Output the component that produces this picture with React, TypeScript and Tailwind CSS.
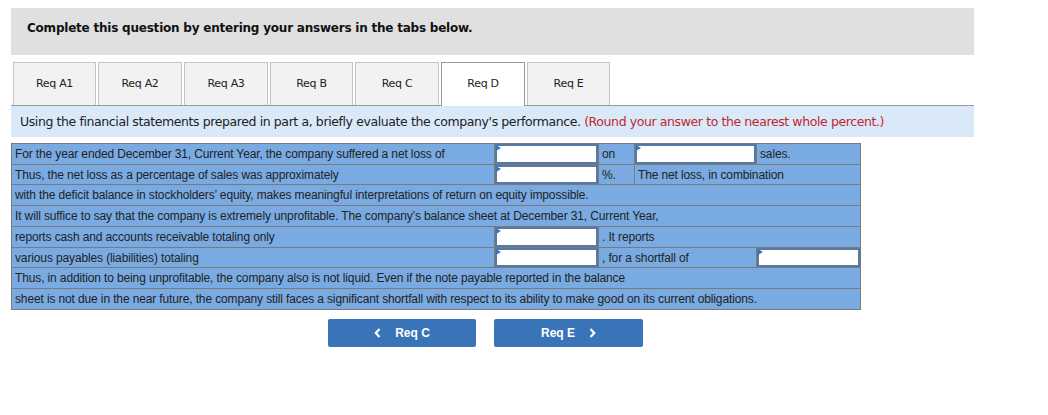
import React from "react";

const V = { fontFamily: '"DejaVu Sans", Verdana, sans-serif' } as const;
const A = { fontFamily: '"Liberation Sans", Arial, sans-serif' } as const;

function Input() {
  return (
    <div className="relative w-full h-full bg-white border-2 border-[#5679a8]">
      <svg className="absolute left-[-1px] top-[-1px]" width="5" height="6" viewBox="0 0 5 6">
        <path d="M0 0 L5 3 L0 6 Z" fill="#3b74c4" />
      </svg>
    </div>
  );
}

const td = "border border-[#7a7a7a] px-[3px] py-0 align-middle whitespace-nowrap";
const tdIn = "border border-[#7a7a7a] p-0 align-middle";

export default function App() {
  const tabs: [string, string][] = [
    ["Req A1", "w-[83px]"],
    ["Req A2", "w-[84px]"],
    ["Req A3", "w-[84px]"],
    ["Req B", "w-[83px]"],
    ["Req C", "w-[84px]"],
    ["Req D", "w-[84px]"],
    ["Req E", "w-[83px]"],
  ];
  return (
    <div className="w-[1048px] h-[415px] bg-white overflow-hidden">
      <div className="ml-[11px] w-[963px] pt-[8px]">
        <div className="h-[47px] bg-[#e0e0e0] pl-[16px] pt-[11px]">
          <div style={V} className="text-[12px] font-bold text-[#111] tracking-[-0.22px]">
            Complete this question by entering your answers in the tabs below.
          </div>
        </div>
        <div className="mt-[7px] flex gap-[2px] pl-[2px] border-b border-[#999]">
          {tabs.map(([t, w]) => {
            const active = t === "Req D";
            return (
              <div
                key={t}
                style={V}
                className={
                  w +
                  " h-[43px] flex items-center justify-center text-[11px] text-[#222] tracking-[-0.3px] " +
                  (active
                    ? "bg-white border border-[#999] border-b-0 -mb-px h-[44px]"
                    : "bg-[#f2f2f2] border border-[#c4c4c4] border-b-0")
                }
              >
                {t}
              </div>
            );
          })}
        </div>
        <div className="h-[31px] bg-[#d9e9f8] flex items-center pl-[9px] pt-[2px]">
          <div style={V} className="text-[12.5px] text-[#222] tracking-[-0.4px] whitespace-nowrap">
            Using the financial statements prepared in part a, briefly evaluate the company's performance.{" "}
            <span className="text-[#c4262e]">(Round your answer to the nearest whole percent.)</span>
          </div>
        </div>
        <table
          style={A}
          className="mt-[6px] w-[849px] border-collapse table-fixed bg-[#79aae2] text-[12px] tracking-[-0.13px] text-[#222] leading-none"
        >
          <colgroup>
            <col className="w-[483px]" />
            <col className="w-[104px]" />
            <col className="w-[36px]" />
            <col className="w-[122px]" />
            <col className="w-[104px]" />
          </colgroup>
          <tbody>
            <tr className="h-[21px]">
              <td className={td}>For the year ended December 31, Current Year, the company suffered a net loss of</td>
              <td className={tdIn + " h-[21px]"}><Input /></td>
              <td className={td}>on</td>
              <td className={tdIn + " h-[21px]"}><Input /></td>
              <td className={td}>sales.</td>
            </tr>
            <tr className="h-[20px]">
              <td className={td}>Thus, the net loss as a percentage of sales was approximately</td>
              <td className={tdIn + " h-[20px]"}><Input /></td>
              <td className={td}>%.</td>
              <td className={td} colSpan={2}>The net loss, in combination</td>
            </tr>
            <tr className="h-[21px]">
              <td className={td} colSpan={5}>
                with the deficit balance in stockholders’ equity, makes meaningful interpretations of return on equity impossible.
              </td>
            </tr>
            <tr className="h-[21px]">
              <td className={td} colSpan={5}>
                It will suffice to say that the company is extremely unprofitable. The company’s balance sheet at December 31, Current Year,
              </td>
            </tr>
            <tr className="h-[21px]">
              <td className={td}>reports cash and accounts receivable totaling only</td>
              <td className={tdIn + " h-[21px]"}><Input /></td>
              <td className={td} colSpan={3}>. It reports</td>
            </tr>
            <tr className="h-[20px]">
              <td className={td}>various payables (liabilities) totaling</td>
              <td className={tdIn + " h-[20px]"}><Input /></td>
              <td className={td} colSpan={2}>, for a shortfall of</td>
              <td className={tdIn + " h-[20px]"}><Input /></td>
            </tr>
            <tr className="h-[21px]">
              <td className={td} colSpan={5}>
                Thus, in addition to being unprofitable, the company also is not liquid. Even if the note payable reported in the balance
              </td>
            </tr>
            <tr className="h-[21px]">
              <td className={td} colSpan={5}>
                sheet is not due in the near future, the company still faces a significant shortfall with respect to its ability to make good on its current obligations.
              </td>
            </tr>
          </tbody>
        </table>
        <div className="mt-[9px] ml-[317px] flex gap-[18px]">
          <button
            style={A}
            className="w-[148px] h-[28px] bg-[#3a74b8] rounded-[2px] text-white font-bold text-[12px] flex items-center justify-center gap-[14px]"
          >
            <svg width="7" height="10" viewBox="0 0 7 10">
              <path d="M5.5 1 L1.8 5 L5.5 9" stroke="white" strokeWidth="2.2" fill="none" />
            </svg>
            <span>Req C</span>
          </button>
          <button
            style={A}
            className="w-[149px] h-[28px] bg-[#3a74b8] rounded-[2px] text-white font-bold text-[12px] flex items-center justify-center gap-[14px]"
          >
            <span>Req E</span>
            <svg width="7" height="10" viewBox="0 0 7 10">
              <path d="M1.5 1 L5.2 5 L1.5 9" stroke="white" strokeWidth="2.2" fill="none" />
            </svg>
          </button>
        </div>
      </div>
    </div>
  );
}
